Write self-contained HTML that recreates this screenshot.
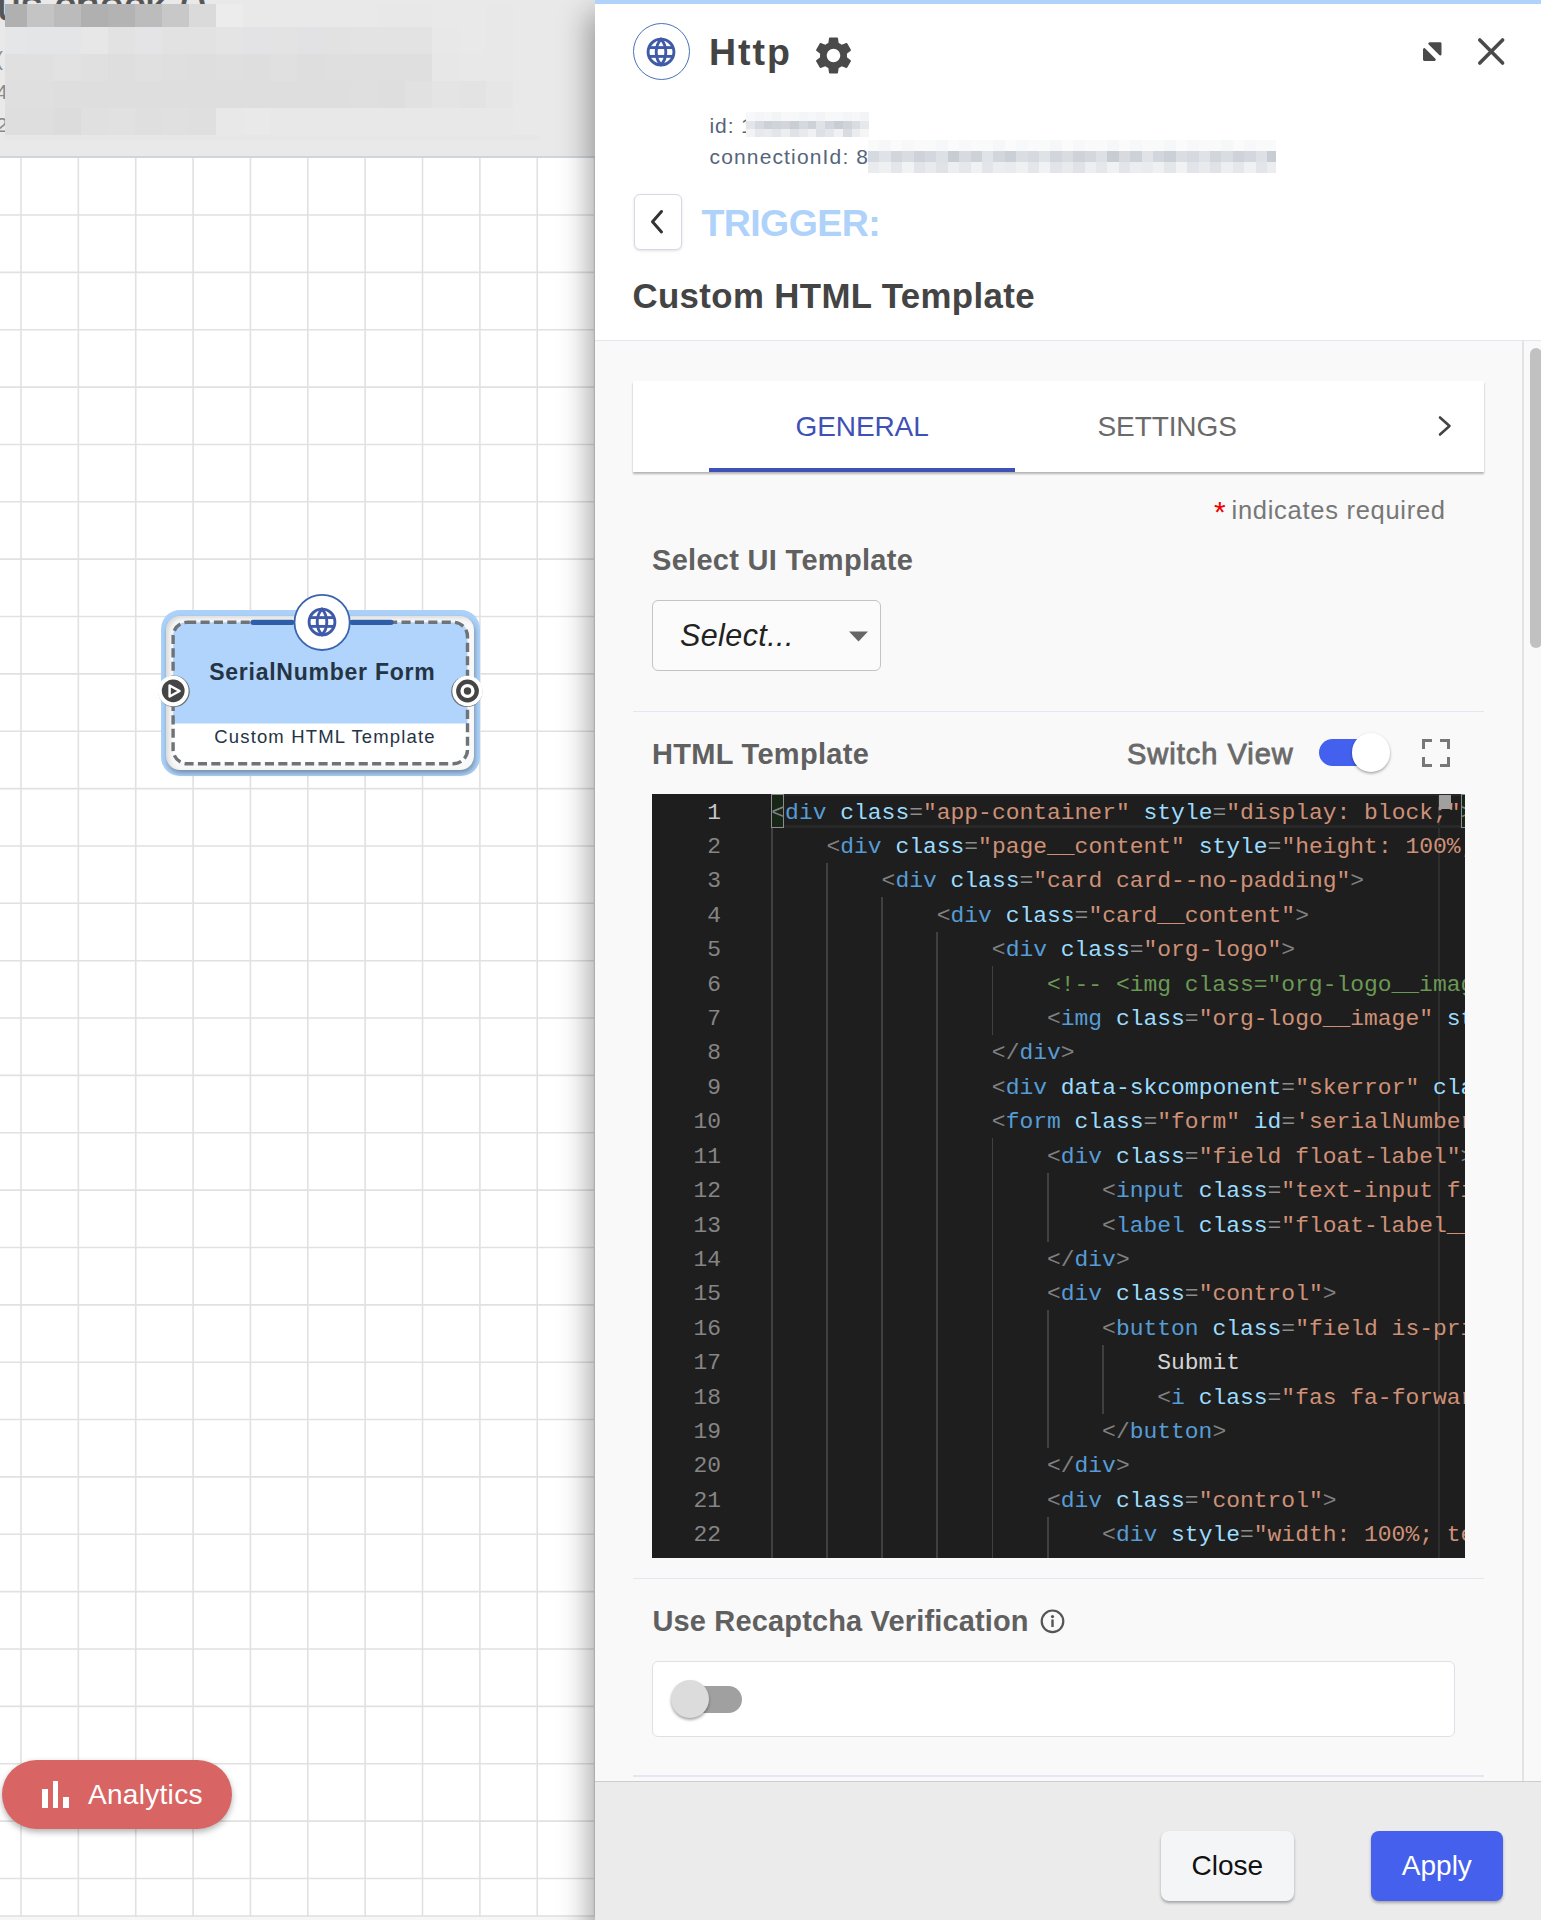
<!DOCTYPE html><html><head><meta charset="utf-8"><style>
*{box-sizing:border-box;margin:0;padding:0}
html,body{width:1541px;height:1920px;overflow:hidden;background:#fff;font-family:"Liberation Sans",sans-serif}
.a{position:absolute}
#canvas{position:absolute;left:0;top:0;width:595px;height:1920px;background:#fff;overflow:hidden}
#hdr{position:absolute;left:0;top:0;width:595px;height:158px;background:#e9e9e9;border-bottom:2px solid #cfd5db;overflow:hidden}
#panel{position:absolute;left:594.5px;top:0;width:946.5px;height:2040px;background:#fff;box-shadow:-6px 12px 28px rgba(0,0,0,.35)}
.code{position:absolute;left:652px;top:794px;width:812.5px;height:764px;background:#1e1e1e;overflow:hidden;font-family:"Liberation Mono",monospace}
.ln{position:absolute;left:0;width:69px;text-align:right;color:#858585;font-size:22.9px;line-height:34.4px;height:34.4px}
.cl{position:absolute;left:119.3px;white-space:pre;font-size:22.98px;line-height:34.4px;height:34.4px;color:#d4d4d4}
.g{position:absolute;width:1.8px;background:#404040}
.p{color:#808080}.t{color:#569cd6}.at{color:#9cdcfe}.s{color:#ce9178}.c{color:#6a9955}.e{color:#d4d4d4}.q{color:#8c8c8c}
.lbl{position:absolute;font-weight:bold;color:#606060;font-size:29px;letter-spacing:0.3px;white-space:nowrap}
</style></head><body>
<div id="canvas">
<svg class="a" style="left:0;top:0" width="595" height="1920"><g stroke="#e1e1e1" stroke-width="1.6"><line x1="21.00" y1="157" x2="21.00" y2="1920"/><line x1="78.36" y1="157" x2="78.36" y2="1920"/><line x1="135.72" y1="157" x2="135.72" y2="1920"/><line x1="193.08" y1="157" x2="193.08" y2="1920"/><line x1="250.44" y1="157" x2="250.44" y2="1920"/><line x1="307.80" y1="157" x2="307.80" y2="1920"/><line x1="365.16" y1="157" x2="365.16" y2="1920"/><line x1="422.52" y1="157" x2="422.52" y2="1920"/><line x1="479.88" y1="157" x2="479.88" y2="1920"/><line x1="537.24" y1="157" x2="537.24" y2="1920"/><line x1="594.60" y1="157" x2="594.60" y2="1920"/><line x1="0" y1="215.00" x2="600" y2="215.00"/><line x1="0" y1="272.36" x2="600" y2="272.36"/><line x1="0" y1="329.72" x2="600" y2="329.72"/><line x1="0" y1="387.08" x2="600" y2="387.08"/><line x1="0" y1="444.44" x2="600" y2="444.44"/><line x1="0" y1="501.80" x2="600" y2="501.80"/><line x1="0" y1="559.16" x2="600" y2="559.16"/><line x1="0" y1="616.52" x2="600" y2="616.52"/><line x1="0" y1="673.88" x2="600" y2="673.88"/><line x1="0" y1="731.24" x2="600" y2="731.24"/><line x1="0" y1="788.60" x2="600" y2="788.60"/><line x1="0" y1="845.96" x2="600" y2="845.96"/><line x1="0" y1="903.32" x2="600" y2="903.32"/><line x1="0" y1="960.68" x2="600" y2="960.68"/><line x1="0" y1="1018.04" x2="600" y2="1018.04"/><line x1="0" y1="1075.40" x2="600" y2="1075.40"/><line x1="0" y1="1132.76" x2="600" y2="1132.76"/><line x1="0" y1="1190.12" x2="600" y2="1190.12"/><line x1="0" y1="1247.48" x2="600" y2="1247.48"/><line x1="0" y1="1304.84" x2="600" y2="1304.84"/><line x1="0" y1="1362.20" x2="600" y2="1362.20"/><line x1="0" y1="1419.56" x2="600" y2="1419.56"/><line x1="0" y1="1476.92" x2="600" y2="1476.92"/><line x1="0" y1="1534.28" x2="600" y2="1534.28"/><line x1="0" y1="1591.64" x2="600" y2="1591.64"/><line x1="0" y1="1649.00" x2="600" y2="1649.00"/><line x1="0" y1="1706.36" x2="600" y2="1706.36"/><line x1="0" y1="1763.72" x2="600" y2="1763.72"/><line x1="0" y1="1821.08" x2="600" y2="1821.08"/><line x1="0" y1="1878.44" x2="600" y2="1878.44"/></g><rect x="0" y="1916.6" width="595" height="3.4" fill="#f7f7f7"/><rect x="0" y="1915.2" width="595" height="1.6" fill="#e0e0e0"/></svg>
<div id="hdr">
<div class="a" style="left:-3px;top:-16px;font-size:43px;line-height:43px;color:#555;-webkit-text-stroke:0.7px #555;white-space:nowrap">us check ()</div>
<div class="a" style="left:-4px;top:41.5px;font-size:21px;color:#8a8a8a;line-height:33px">(<br>4<br>2</div>
<div class="a" style="left:5px;top:4px;width:22px;height:23px;background:#b0b0b0"></div>
<div class="a" style="left:27px;top:4px;width:27px;height:23px;background:#c4c4c4"></div>
<div class="a" style="left:54px;top:4px;width:27px;height:23px;background:#bbbbbb"></div>
<div class="a" style="left:81px;top:4px;width:27px;height:23px;background:#b0b0b0"></div>
<div class="a" style="left:108px;top:4px;width:27px;height:23px;background:#b3b3b3"></div>
<div class="a" style="left:135px;top:4px;width:27px;height:23px;background:#bcbcbc"></div>
<div class="a" style="left:162px;top:4px;width:27px;height:23px;background:#c8c8c8"></div>
<div class="a" style="left:189px;top:4px;width:27px;height:23px;background:#dadada"></div>
<div class="a" style="left:216px;top:4px;width:27px;height:23px;background:#ececec"></div>
<div class="a" style="left:243px;top:4px;width:27px;height:23px;background:#e9e9e9"></div>
<div class="a" style="left:270px;top:4px;width:27px;height:23px;background:#e9e9e9"></div>
<div class="a" style="left:297px;top:4px;width:27px;height:23px;background:#e9e9e9"></div>
<div class="a" style="left:324px;top:4px;width:27px;height:23px;background:#e9e9e9"></div>
<div class="a" style="left:351px;top:4px;width:27px;height:23px;background:#e9e9e9"></div>
<div class="a" style="left:378px;top:4px;width:27px;height:23px;background:#e8e8e8"></div>
<div class="a" style="left:405px;top:4px;width:27px;height:23px;background:#e8e8e8"></div>
<div class="a" style="left:432px;top:4px;width:27px;height:23px;background:#e9e9e9"></div>
<div class="a" style="left:459px;top:4px;width:27px;height:23px;background:#e9e9e9"></div>
<div class="a" style="left:486px;top:4px;width:27px;height:23px;background:#e8e8e8"></div>
<div class="a" style="left:513px;top:4px;width:27px;height:23px;background:#e9e9e9"></div>
<div class="a" style="left:5px;top:27px;width:22px;height:27px;background:#e5e6e8"></div>
<div class="a" style="left:27px;top:27px;width:27px;height:27px;background:#e4e5e7"></div>
<div class="a" style="left:54px;top:27px;width:27px;height:27px;background:#e4e5e7"></div>
<div class="a" style="left:81px;top:27px;width:27px;height:27px;background:#e7e7e7"></div>
<div class="a" style="left:108px;top:27px;width:27px;height:27px;background:#e2e2e2"></div>
<div class="a" style="left:135px;top:27px;width:27px;height:27px;background:#e4e4e6"></div>
<div class="a" style="left:162px;top:27px;width:27px;height:27px;background:#e2e2e2"></div>
<div class="a" style="left:189px;top:27px;width:27px;height:27px;background:#e2e2e2"></div>
<div class="a" style="left:216px;top:27px;width:27px;height:27px;background:#e4e4e4"></div>
<div class="a" style="left:243px;top:27px;width:27px;height:27px;background:#e3e3e5"></div>
<div class="a" style="left:270px;top:27px;width:27px;height:27px;background:#e3e3e3"></div>
<div class="a" style="left:297px;top:27px;width:27px;height:27px;background:#e2e2e4"></div>
<div class="a" style="left:324px;top:27px;width:27px;height:27px;background:#e2e2e2"></div>
<div class="a" style="left:351px;top:27px;width:27px;height:27px;background:#e3e3e3"></div>
<div class="a" style="left:378px;top:27px;width:27px;height:27px;background:#e3e3e3"></div>
<div class="a" style="left:405px;top:27px;width:27px;height:27px;background:#e3e3e3"></div>
<div class="a" style="left:432px;top:27px;width:27px;height:27px;background:#e8e8e8"></div>
<div class="a" style="left:459px;top:27px;width:27px;height:27px;background:#e9e9e9"></div>
<div class="a" style="left:486px;top:27px;width:27px;height:27px;background:#e8e8e8"></div>
<div class="a" style="left:513px;top:27px;width:27px;height:27px;background:#e9e9e9"></div>
<div class="a" style="left:5px;top:54px;width:22px;height:27px;background:#e0e0e0"></div>
<div class="a" style="left:27px;top:54px;width:27px;height:27px;background:#e0e0e0"></div>
<div class="a" style="left:54px;top:54px;width:27px;height:27px;background:#e1e2e1"></div>
<div class="a" style="left:81px;top:54px;width:27px;height:27px;background:#e0e0e0"></div>
<div class="a" style="left:108px;top:54px;width:27px;height:27px;background:#dedede"></div>
<div class="a" style="left:135px;top:54px;width:27px;height:27px;background:#e0e0e0"></div>
<div class="a" style="left:162px;top:54px;width:27px;height:27px;background:#dfdfdf"></div>
<div class="a" style="left:189px;top:54px;width:27px;height:27px;background:#dedede"></div>
<div class="a" style="left:216px;top:54px;width:27px;height:27px;background:#dfdfdf"></div>
<div class="a" style="left:243px;top:54px;width:27px;height:27px;background:#dedede"></div>
<div class="a" style="left:270px;top:54px;width:27px;height:27px;background:#e0e0e0"></div>
<div class="a" style="left:297px;top:54px;width:27px;height:27px;background:#dedede"></div>
<div class="a" style="left:324px;top:54px;width:27px;height:27px;background:#dfdfdf"></div>
<div class="a" style="left:351px;top:54px;width:27px;height:27px;background:#dfdfdf"></div>
<div class="a" style="left:378px;top:54px;width:27px;height:27px;background:#dfdfdf"></div>
<div class="a" style="left:405px;top:54px;width:27px;height:27px;background:#dfdfdf"></div>
<div class="a" style="left:432px;top:54px;width:27px;height:27px;background:#e7e7e7"></div>
<div class="a" style="left:459px;top:54px;width:27px;height:27px;background:#e8e8e8"></div>
<div class="a" style="left:486px;top:54px;width:27px;height:27px;background:#e8e8e8"></div>
<div class="a" style="left:513px;top:54px;width:27px;height:27px;background:#e9e9e9"></div>
<div class="a" style="left:5px;top:81px;width:22px;height:27px;background:#dfdfdf"></div>
<div class="a" style="left:27px;top:81px;width:27px;height:27px;background:#dfdfdf"></div>
<div class="a" style="left:54px;top:81px;width:27px;height:27px;background:#dedede"></div>
<div class="a" style="left:81px;top:81px;width:27px;height:27px;background:#dedede"></div>
<div class="a" style="left:108px;top:81px;width:27px;height:27px;background:#dedede"></div>
<div class="a" style="left:135px;top:81px;width:27px;height:27px;background:#dedede"></div>
<div class="a" style="left:162px;top:81px;width:27px;height:27px;background:#dedede"></div>
<div class="a" style="left:189px;top:81px;width:27px;height:27px;background:#dedede"></div>
<div class="a" style="left:216px;top:81px;width:27px;height:27px;background:#dedede"></div>
<div class="a" style="left:243px;top:81px;width:27px;height:27px;background:#dedede"></div>
<div class="a" style="left:270px;top:81px;width:27px;height:27px;background:#dedede"></div>
<div class="a" style="left:297px;top:81px;width:27px;height:27px;background:#dedede"></div>
<div class="a" style="left:324px;top:81px;width:27px;height:27px;background:#dedede"></div>
<div class="a" style="left:351px;top:81px;width:27px;height:27px;background:#dfdfdf"></div>
<div class="a" style="left:378px;top:81px;width:27px;height:27px;background:#dedede"></div>
<div class="a" style="left:405px;top:81px;width:27px;height:27px;background:#e1e1e1"></div>
<div class="a" style="left:432px;top:81px;width:27px;height:27px;background:#e4e4e4"></div>
<div class="a" style="left:459px;top:81px;width:27px;height:27px;background:#e3e3e3"></div>
<div class="a" style="left:486px;top:81px;width:27px;height:27px;background:#e6e6e6"></div>
<div class="a" style="left:513px;top:81px;width:27px;height:27px;background:#e9e9e9"></div>
<div class="a" style="left:5px;top:108px;width:22px;height:27px;background:#dedede"></div>
<div class="a" style="left:27px;top:108px;width:27px;height:27px;background:#dedede"></div>
<div class="a" style="left:54px;top:108px;width:27px;height:27px;background:#dcdcdc"></div>
<div class="a" style="left:81px;top:108px;width:27px;height:27px;background:#e0e0e0"></div>
<div class="a" style="left:108px;top:108px;width:27px;height:27px;background:#e1e1e1"></div>
<div class="a" style="left:135px;top:108px;width:27px;height:27px;background:#dfdfdf"></div>
<div class="a" style="left:162px;top:108px;width:27px;height:27px;background:#e0e0e0"></div>
<div class="a" style="left:189px;top:108px;width:27px;height:27px;background:#dfdfdf"></div>
<div class="a" style="left:216px;top:108px;width:27px;height:27px;background:#e8e8e8"></div>
<div class="a" style="left:243px;top:108px;width:27px;height:27px;background:#e9e9e9"></div>
<div class="a" style="left:270px;top:108px;width:27px;height:27px;background:#e8e8e8"></div>
<div class="a" style="left:297px;top:108px;width:27px;height:27px;background:#e8e8e8"></div>
<div class="a" style="left:324px;top:108px;width:27px;height:27px;background:#e8e8e8"></div>
<div class="a" style="left:351px;top:108px;width:27px;height:27px;background:#e8e8e8"></div>
<div class="a" style="left:378px;top:108px;width:27px;height:27px;background:#e8e8e8"></div>
<div class="a" style="left:405px;top:108px;width:27px;height:27px;background:#e8e8e8"></div>
<div class="a" style="left:432px;top:108px;width:27px;height:27px;background:#e8e8e8"></div>
<div class="a" style="left:459px;top:108px;width:27px;height:27px;background:#e8e8e8"></div>
<div class="a" style="left:486px;top:108px;width:27px;height:27px;background:#e8e8e8"></div>
<div class="a" style="left:513px;top:108px;width:27px;height:27px;background:#e9e9e9"></div>
<div class="a" style="left:5px;top:135px;width:536px;height:5px;background:#e7e7e7"></div>
</div>
<div class="a" style="left:160.8px;top:609.7px;width:319.2px;height:166px;border-radius:19px;background:#acd1f9"></div>
<div class="a" style="left:166px;top:615.7px;width:308px;height:154.5px;border-radius:14px;background:#f8f8f8;box-shadow:1px 3px 5px rgba(0,0,0,.32), inset 3px 2px 4px rgba(0,0,0,.12)"></div>
<svg class="a" style="left:150px;top:580px" width="340" height="210" viewBox="150 580 340 210"><rect x="173.1" y="622.3" width="294.4" height="141.4" rx="14" fill="#fff"/><path d="M173.1 723.6 V636.3 Q173.1 622.3 187.1 622.3 H453.5 Q467.5 622.3 467.5 636.3 V723.6 Z" fill="#b0d4fb"/><rect x="173.1" y="622.3" width="294.4" height="141.4" rx="14" fill="none" stroke="#6e7378" stroke-width="3.4" stroke-dasharray="9.1 4.3"/><line x1="253" y1="622.3" x2="292" y2="622.3" stroke="#2e5ea8" stroke-width="5.2" stroke-linecap="round"/><line x1="352" y1="622.3" x2="391" y2="622.3" stroke="#2e5ea8" stroke-width="5.2" stroke-linecap="round"/><circle cx="322.1" cy="622.4" r="27.6" fill="#fff" stroke="#3a64b0" stroke-width="1.8"/><circle cx="174" cy="691.3" r="15.8" fill="#6a7075"/><circle cx="173.2" cy="690.8" r="15.4" fill="#fff"/><circle cx="173.2" cy="690.8" r="11.4" fill="#454545"/><path d="M169.6 685.5 L179.6 691 L169.6 696.5 Z" fill="none" stroke="#fff" stroke-width="2.5" stroke-linejoin="round"/><circle cx="466.8" cy="691.5" r="15.6" fill="#6a7075"/><circle cx="467.5" cy="691" r="15.2" fill="#fff"/><circle cx="467.5" cy="691" r="11.4" fill="#454545"/><circle cx="467.5" cy="691" r="5.4" fill="none" stroke="#fff" stroke-width="3.4"/></svg>
<svg class="a" style="left:307.1px;top:607.4px" width="30" height="30" viewBox="-15 -15 30 30"><g fill="none" stroke="#3f5aa8" stroke-width="2.9"><circle r="12.9"/><path d="M0 -12.8 C-6.4 -6 -6.4 6 0 12.8 C6.4 6 6.4 -6 0 -12.8 Z"/><line x1="-12.8" y1="-4.4" x2="12.8" y2="-4.4"/><line x1="-12.8" y1="4.4" x2="12.8" y2="4.4"/></g></svg>
<div class="a" style="left:162.3px;top:658.5px;width:320px;text-align:center;font-size:23px;letter-spacing:0.75px;font-weight:bold;color:#253445;white-space:nowrap">SerialNumber Form</div>
<div class="a" style="left:167px;top:726px;width:316px;text-align:center;font-size:18.5px;letter-spacing:1.15px;color:#253445;white-space:nowrap">Custom HTML Template</div>
<div class="a" style="left:2px;top:1759.5px;width:230px;height:69.5px;border-radius:35px;background:#d96464;box-shadow:0 3px 6px rgba(0,0,0,.3)"></div>
<div class="a" style="left:42px;top:1789px;width:6px;height:19px;background:#fff"></div>
<div class="a" style="left:52.6px;top:1781.3px;width:5.5px;height:26.7px;background:#fff"></div>
<div class="a" style="left:63.3px;top:1796.5px;width:5.6px;height:11.5px;background:#fff"></div>
<div class="a" style="left:88px;top:1778.5px;font-size:28px;letter-spacing:0.3px;color:#fff;white-space:nowrap">Analytics</div>
</div>
<div id="panel"></div>
<div class="a" style="left:595px;top:0;width:946px;height:4px;background:#afd3fb"></div>
<div class="a" style="left:633px;top:22.6px;width:57.2px;height:57.2px;border-radius:50%;border:1.7px solid #4a72b8"></div>
<svg class="a" style="left:646.4px;top:36.6px" width="30" height="30" viewBox="-15 -15 30 30"><g fill="none" stroke="#3f5aa6" stroke-width="2.9"><circle r="12.9"/><path d="M0 -12.8 C-6.4 -6 -6.4 6 0 12.8 C6.4 6 6.4 -6 0 -12.8 Z"/><line x1="-12.8" y1="-4.4" x2="12.8" y2="-4.4"/><line x1="-12.8" y1="4.4" x2="12.8" y2="4.4"/></g></svg>
<div class="a" style="left:709px;top:30px;font-size:37.5px;letter-spacing:2px;font-weight:bold;color:#444;white-space:nowrap;line-height:44px">Http</div>
<svg class="a" style="left:811.2px;top:33.2px" width="45" height="45" viewBox="0 0 24 24"><path fill="#4a4a4a" d="M19.14 12.94c.04-.3.06-.61.06-.94 0-.32-.02-.64-.07-.94l2.03-1.58c.18-.14.23-.41.12-.61l-1.92-3.32c-.12-.22-.37-.29-.59-.22l-2.39.96c-.5-.38-1.03-.7-1.62-.94l-.36-2.54c-.04-.24-.24-.41-.48-.41h-3.84c-.24 0-.43.17-.47.41l-.36 2.54c-.59.24-1.13.57-1.62.94l-2.39-.96c-.22-.08-.47 0-.59.22L2.74 8.87c-.12.21-.08.47.12.61l2.03 1.58c-.05.3-.09.63-.09.94s.02.64.07.94l-2.03 1.58c-.18.14-.23.41-.12.61l1.92 3.32c.12.22.37.29.59.22l2.39-.96c.5.38 1.03.7 1.62.94l.36 2.54c.05.24.24.41.48.41h3.84c.24 0 .44-.17.47-.41l.36-2.54c.59-.24 1.13-.56 1.62-.94l2.39.96c.22.08.47 0 .59-.22l1.92-3.32c.12-.22.07-.47-.12-.61l-2.01-1.58zM12 15.6c-1.98 0-3.6-1.62-3.6-3.6s1.62-3.6 3.6-3.6 3.6 1.62 3.6 3.6-1.62 3.6-3.6 3.6z"/></svg>
<svg class="a" style="left:1415px;top:35px" width="35" height="33" viewBox="1415 35 35 33"><g fill="#4a4a4a" stroke="#4a4a4a" stroke-width="2.6" stroke-linejoin="round"><path d="M1429.6 43.6 L1440.2 43.6 L1440.2 54.2 Z"/><path d="M1424.3 49.4 L1424.3 59.6 L1434.5 59.6 Z"/></g></svg>
<svg class="a" style="left:1474px;top:35px" width="34" height="34" viewBox="0 0 34 34"><g stroke="#4a4a4a" stroke-width="3.6" stroke-linecap="round"><line x1="5.8" y1="5" x2="28.6" y2="28"/><line x1="28.6" y1="5" x2="5.8" y2="28"/></g></svg>
<div class="a" style="left:709.5px;top:113px;font-size:21px;letter-spacing:0.9px;color:#55657a;white-space:nowrap;line-height:26px">id: 1</div>
<div class="a" style="left:709.5px;top:143.5px;font-size:21px;letter-spacing:1.15px;color:#55657a;white-space:nowrap;line-height:26px">connectionId: 8</div>
<div class="a" style="left:746.0px;top:112.0px;width:9.1px;height:8.5px;background:#f7f8f9"></div><div class="a" style="left:754.8px;top:112.0px;width:9.1px;height:8.5px;background:#f4f5f6"></div><div class="a" style="left:763.6px;top:112.0px;width:9.1px;height:8.5px;background:#f6f7f8"></div><div class="a" style="left:772.4px;top:112.0px;width:9.1px;height:8.5px;background:#f3f4f6"></div><div class="a" style="left:781.2px;top:112.0px;width:9.1px;height:8.5px;background:#f8f8f9"></div><div class="a" style="left:790.0px;top:112.0px;width:9.1px;height:8.5px;background:#f7f8f9"></div><div class="a" style="left:798.8px;top:112.0px;width:9.1px;height:8.5px;background:#f4f5f6"></div><div class="a" style="left:807.6px;top:112.0px;width:9.1px;height:8.5px;background:#f6f7f8"></div><div class="a" style="left:816.4px;top:112.0px;width:9.1px;height:8.5px;background:#f3f4f6"></div><div class="a" style="left:825.2px;top:112.0px;width:9.1px;height:8.5px;background:#f8f8f9"></div><div class="a" style="left:834.0px;top:112.0px;width:9.1px;height:8.5px;background:#f7f8f9"></div><div class="a" style="left:842.8px;top:112.0px;width:9.1px;height:8.5px;background:#f4f5f6"></div><div class="a" style="left:851.6px;top:112.0px;width:9.1px;height:8.5px;background:#f6f7f8"></div><div class="a" style="left:860.4px;top:112.0px;width:8.9px;height:8.5px;background:#f3f4f6"></div>
<div class="a" style="left:746.0px;top:120.5px;width:9.1px;height:8.5px;background:#e2e5e9"></div><div class="a" style="left:754.8px;top:120.5px;width:9.1px;height:8.5px;background:#d6dae0"></div><div class="a" style="left:763.6px;top:120.5px;width:9.1px;height:8.5px;background:#ccd1d8"></div><div class="a" style="left:772.4px;top:120.5px;width:9.1px;height:8.5px;background:#cfd3da"></div><div class="a" style="left:781.2px;top:120.5px;width:9.1px;height:8.5px;background:#d2d6dc"></div><div class="a" style="left:790.0px;top:120.5px;width:9.1px;height:8.5px;background:#c9ced5"></div><div class="a" style="left:798.8px;top:120.5px;width:9.1px;height:8.5px;background:#d5d9df"></div><div class="a" style="left:807.6px;top:120.5px;width:9.1px;height:8.5px;background:#cdd2d8"></div><div class="a" style="left:816.4px;top:120.5px;width:9.1px;height:8.5px;background:#dfe2e6"></div><div class="a" style="left:825.2px;top:120.5px;width:9.1px;height:8.5px;background:#d2d6dc"></div><div class="a" style="left:834.0px;top:120.5px;width:9.1px;height:8.5px;background:#c8cdd4"></div><div class="a" style="left:842.8px;top:120.5px;width:9.1px;height:8.5px;background:#d0d4da"></div><div class="a" style="left:851.6px;top:120.5px;width:9.1px;height:8.5px;background:#d9dce1"></div><div class="a" style="left:860.4px;top:120.5px;width:8.9px;height:8.5px;background:#e6e8eb"></div>
<div class="a" style="left:746.0px;top:129.0px;width:9.1px;height:8.3px;background:#f2f3f5"></div><div class="a" style="left:754.8px;top:129.0px;width:9.1px;height:8.3px;background:#e6e8ec"></div><div class="a" style="left:763.6px;top:129.0px;width:9.1px;height:8.3px;background:#e9ebee"></div><div class="a" style="left:772.4px;top:129.0px;width:9.1px;height:8.3px;background:#e2e5e9"></div><div class="a" style="left:781.2px;top:129.0px;width:9.1px;height:8.3px;background:#eceef0"></div><div class="a" style="left:790.0px;top:129.0px;width:9.1px;height:8.3px;background:#dfe2e6"></div><div class="a" style="left:798.8px;top:129.0px;width:9.1px;height:8.3px;background:#e7e9ec"></div><div class="a" style="left:807.6px;top:129.0px;width:9.1px;height:8.3px;background:#f0f1f3"></div><div class="a" style="left:816.4px;top:129.0px;width:9.1px;height:8.3px;background:#dde0e5"></div><div class="a" style="left:825.2px;top:129.0px;width:9.1px;height:8.3px;background:#e3e6ea"></div><div class="a" style="left:834.0px;top:129.0px;width:9.1px;height:8.3px;background:#f0f1f3"></div><div class="a" style="left:842.8px;top:129.0px;width:9.1px;height:8.3px;background:#d8dce1"></div><div class="a" style="left:851.6px;top:129.0px;width:9.1px;height:8.3px;background:#eaecef"></div><div class="a" style="left:860.4px;top:129.0px;width:8.9px;height:8.3px;background:#f5f5f6"></div>
<div class="a" style="left:868.0px;top:140.0px;width:11.7px;height:11.0px;background:#f9fafa"></div><div class="a" style="left:879.4px;top:140.0px;width:11.7px;height:11.0px;background:#f6f7f8"></div><div class="a" style="left:890.8px;top:140.0px;width:11.7px;height:11.0px;background:#fbfbfb"></div><div class="a" style="left:902.2px;top:140.0px;width:11.7px;height:11.0px;background:#f7f8f9"></div><div class="a" style="left:913.6px;top:140.0px;width:11.7px;height:11.0px;background:#fafafb"></div><div class="a" style="left:925.0px;top:140.0px;width:11.7px;height:11.0px;background:#f9fafa"></div><div class="a" style="left:936.4px;top:140.0px;width:11.7px;height:11.0px;background:#f6f7f8"></div><div class="a" style="left:947.8px;top:140.0px;width:11.7px;height:11.0px;background:#fbfbfb"></div><div class="a" style="left:959.2px;top:140.0px;width:11.7px;height:11.0px;background:#f7f8f9"></div><div class="a" style="left:970.6px;top:140.0px;width:11.7px;height:11.0px;background:#fafafb"></div><div class="a" style="left:982.0px;top:140.0px;width:11.7px;height:11.0px;background:#f9fafa"></div><div class="a" style="left:993.4px;top:140.0px;width:11.7px;height:11.0px;background:#f6f7f8"></div><div class="a" style="left:1004.8px;top:140.0px;width:11.7px;height:11.0px;background:#fbfbfb"></div><div class="a" style="left:1016.2px;top:140.0px;width:11.7px;height:11.0px;background:#f7f8f9"></div><div class="a" style="left:1027.6px;top:140.0px;width:11.7px;height:11.0px;background:#fafafb"></div><div class="a" style="left:1039.0px;top:140.0px;width:11.7px;height:11.0px;background:#f9fafa"></div><div class="a" style="left:1050.4px;top:140.0px;width:11.7px;height:11.0px;background:#f6f7f8"></div><div class="a" style="left:1061.8px;top:140.0px;width:11.7px;height:11.0px;background:#fbfbfb"></div><div class="a" style="left:1073.2px;top:140.0px;width:11.7px;height:11.0px;background:#f7f8f9"></div><div class="a" style="left:1084.6px;top:140.0px;width:11.7px;height:11.0px;background:#fafafb"></div><div class="a" style="left:1096.0px;top:140.0px;width:11.7px;height:11.0px;background:#f9fafa"></div><div class="a" style="left:1107.4px;top:140.0px;width:11.7px;height:11.0px;background:#f6f7f8"></div><div class="a" style="left:1118.8px;top:140.0px;width:11.7px;height:11.0px;background:#fbfbfb"></div><div class="a" style="left:1130.2px;top:140.0px;width:11.7px;height:11.0px;background:#f7f8f9"></div><div class="a" style="left:1141.6px;top:140.0px;width:11.7px;height:11.0px;background:#fafafb"></div><div class="a" style="left:1153.0px;top:140.0px;width:11.7px;height:11.0px;background:#f9fafa"></div><div class="a" style="left:1164.4px;top:140.0px;width:11.7px;height:11.0px;background:#f6f7f8"></div><div class="a" style="left:1175.8px;top:140.0px;width:11.7px;height:11.0px;background:#fbfbfb"></div><div class="a" style="left:1187.2px;top:140.0px;width:11.7px;height:11.0px;background:#f7f8f9"></div><div class="a" style="left:1198.6px;top:140.0px;width:11.7px;height:11.0px;background:#fafafb"></div><div class="a" style="left:1210.0px;top:140.0px;width:11.7px;height:11.0px;background:#f9fafa"></div><div class="a" style="left:1221.4px;top:140.0px;width:11.7px;height:11.0px;background:#f6f7f8"></div><div class="a" style="left:1232.8px;top:140.0px;width:11.7px;height:11.0px;background:#fbfbfb"></div><div class="a" style="left:1244.2px;top:140.0px;width:11.7px;height:11.0px;background:#f7f8f9"></div><div class="a" style="left:1255.6px;top:140.0px;width:11.7px;height:11.0px;background:#fafafb"></div><div class="a" style="left:1267.0px;top:140.0px;width:9.3px;height:11.0px;background:#f9fafa"></div>
<div class="a" style="left:868.0px;top:151.0px;width:11.7px;height:11.0px;background:#d6dae0"></div><div class="a" style="left:879.4px;top:151.0px;width:11.7px;height:11.0px;background:#dfe2e6"></div><div class="a" style="left:890.8px;top:151.0px;width:11.7px;height:11.0px;background:#d2d6dc"></div><div class="a" style="left:902.2px;top:151.0px;width:11.7px;height:11.0px;background:#d9dde2"></div><div class="a" style="left:913.6px;top:151.0px;width:11.7px;height:11.0px;background:#cfd3d9"></div><div class="a" style="left:925.0px;top:151.0px;width:11.7px;height:11.0px;background:#d4d8de"></div><div class="a" style="left:936.4px;top:151.0px;width:11.7px;height:11.0px;background:#dde0e5"></div><div class="a" style="left:947.8px;top:151.0px;width:11.7px;height:11.0px;background:#c8cdd4"></div><div class="a" style="left:959.2px;top:151.0px;width:11.7px;height:11.0px;background:#d7dbe0"></div><div class="a" style="left:970.6px;top:151.0px;width:11.7px;height:11.0px;background:#cdd2d8"></div><div class="a" style="left:982.0px;top:151.0px;width:11.7px;height:11.0px;background:#e0e3e7"></div><div class="a" style="left:993.4px;top:151.0px;width:11.7px;height:11.0px;background:#d3d7dd"></div><div class="a" style="left:1004.8px;top:151.0px;width:11.7px;height:11.0px;background:#cbd0d6"></div><div class="a" style="left:1016.2px;top:151.0px;width:11.7px;height:11.0px;background:#dadee3"></div><div class="a" style="left:1027.6px;top:151.0px;width:11.7px;height:11.0px;background:#d6dae0"></div><div class="a" style="left:1039.0px;top:151.0px;width:11.7px;height:11.0px;background:#dfe2e6"></div><div class="a" style="left:1050.4px;top:151.0px;width:11.7px;height:11.0px;background:#d2d6dc"></div><div class="a" style="left:1061.8px;top:151.0px;width:11.7px;height:11.0px;background:#d9dde2"></div><div class="a" style="left:1073.2px;top:151.0px;width:11.7px;height:11.0px;background:#cfd3d9"></div><div class="a" style="left:1084.6px;top:151.0px;width:11.7px;height:11.0px;background:#d4d8de"></div><div class="a" style="left:1096.0px;top:151.0px;width:11.7px;height:11.0px;background:#dde0e5"></div><div class="a" style="left:1107.4px;top:151.0px;width:11.7px;height:11.0px;background:#c8cdd4"></div><div class="a" style="left:1118.8px;top:151.0px;width:11.7px;height:11.0px;background:#d7dbe0"></div><div class="a" style="left:1130.2px;top:151.0px;width:11.7px;height:11.0px;background:#cdd2d8"></div><div class="a" style="left:1141.6px;top:151.0px;width:11.7px;height:11.0px;background:#e0e3e7"></div><div class="a" style="left:1153.0px;top:151.0px;width:11.7px;height:11.0px;background:#d3d7dd"></div><div class="a" style="left:1164.4px;top:151.0px;width:11.7px;height:11.0px;background:#cbd0d6"></div><div class="a" style="left:1175.8px;top:151.0px;width:11.7px;height:11.0px;background:#dadee3"></div><div class="a" style="left:1187.2px;top:151.0px;width:11.7px;height:11.0px;background:#d6dae0"></div><div class="a" style="left:1198.6px;top:151.0px;width:11.7px;height:11.0px;background:#dfe2e6"></div><div class="a" style="left:1210.0px;top:151.0px;width:11.7px;height:11.0px;background:#d2d6dc"></div><div class="a" style="left:1221.4px;top:151.0px;width:11.7px;height:11.0px;background:#d9dde2"></div><div class="a" style="left:1232.8px;top:151.0px;width:11.7px;height:11.0px;background:#cfd3d9"></div><div class="a" style="left:1244.2px;top:151.0px;width:11.7px;height:11.0px;background:#d4d8de"></div><div class="a" style="left:1255.6px;top:151.0px;width:11.7px;height:11.0px;background:#dde0e5"></div><div class="a" style="left:1267.0px;top:151.0px;width:9.3px;height:11.0px;background:#c8cdd4"></div>
<div class="a" style="left:868.0px;top:162.0px;width:11.7px;height:10.5px;background:#e9ebee"></div><div class="a" style="left:879.4px;top:162.0px;width:11.7px;height:10.5px;background:#eef0f2"></div><div class="a" style="left:890.8px;top:162.0px;width:11.7px;height:10.5px;background:#e4e7ea"></div><div class="a" style="left:902.2px;top:162.0px;width:11.7px;height:10.5px;background:#f1f2f4"></div><div class="a" style="left:913.6px;top:162.0px;width:11.7px;height:10.5px;background:#e1e4e8"></div><div class="a" style="left:925.0px;top:162.0px;width:11.7px;height:10.5px;background:#e8eaed"></div><div class="a" style="left:936.4px;top:162.0px;width:11.7px;height:10.5px;background:#dfe2e6"></div><div class="a" style="left:947.8px;top:162.0px;width:11.7px;height:10.5px;background:#eceef1"></div><div class="a" style="left:959.2px;top:162.0px;width:11.7px;height:10.5px;background:#e5e7eb"></div><div class="a" style="left:970.6px;top:162.0px;width:11.7px;height:10.5px;background:#f0f1f3"></div><div class="a" style="left:982.0px;top:162.0px;width:11.7px;height:10.5px;background:#e2e5e9"></div><div class="a" style="left:993.4px;top:162.0px;width:11.7px;height:10.5px;background:#ebedf0"></div><div class="a" style="left:1004.8px;top:162.0px;width:11.7px;height:10.5px;background:#e9ebee"></div><div class="a" style="left:1016.2px;top:162.0px;width:11.7px;height:10.5px;background:#eef0f2"></div><div class="a" style="left:1027.6px;top:162.0px;width:11.7px;height:10.5px;background:#e4e7ea"></div><div class="a" style="left:1039.0px;top:162.0px;width:11.7px;height:10.5px;background:#f1f2f4"></div><div class="a" style="left:1050.4px;top:162.0px;width:11.7px;height:10.5px;background:#e1e4e8"></div><div class="a" style="left:1061.8px;top:162.0px;width:11.7px;height:10.5px;background:#e8eaed"></div><div class="a" style="left:1073.2px;top:162.0px;width:11.7px;height:10.5px;background:#dfe2e6"></div><div class="a" style="left:1084.6px;top:162.0px;width:11.7px;height:10.5px;background:#eceef1"></div><div class="a" style="left:1096.0px;top:162.0px;width:11.7px;height:10.5px;background:#e5e7eb"></div><div class="a" style="left:1107.4px;top:162.0px;width:11.7px;height:10.5px;background:#f0f1f3"></div><div class="a" style="left:1118.8px;top:162.0px;width:11.7px;height:10.5px;background:#e2e5e9"></div><div class="a" style="left:1130.2px;top:162.0px;width:11.7px;height:10.5px;background:#ebedf0"></div><div class="a" style="left:1141.6px;top:162.0px;width:11.7px;height:10.5px;background:#e9ebee"></div><div class="a" style="left:1153.0px;top:162.0px;width:11.7px;height:10.5px;background:#eef0f2"></div><div class="a" style="left:1164.4px;top:162.0px;width:11.7px;height:10.5px;background:#e4e7ea"></div><div class="a" style="left:1175.8px;top:162.0px;width:11.7px;height:10.5px;background:#f1f2f4"></div><div class="a" style="left:1187.2px;top:162.0px;width:11.7px;height:10.5px;background:#e1e4e8"></div><div class="a" style="left:1198.6px;top:162.0px;width:11.7px;height:10.5px;background:#e8eaed"></div><div class="a" style="left:1210.0px;top:162.0px;width:11.7px;height:10.5px;background:#dfe2e6"></div><div class="a" style="left:1221.4px;top:162.0px;width:11.7px;height:10.5px;background:#eceef1"></div><div class="a" style="left:1232.8px;top:162.0px;width:11.7px;height:10.5px;background:#e5e7eb"></div><div class="a" style="left:1244.2px;top:162.0px;width:11.7px;height:10.5px;background:#f0f1f3"></div><div class="a" style="left:1255.6px;top:162.0px;width:11.7px;height:10.5px;background:#e2e5e9"></div><div class="a" style="left:1267.0px;top:162.0px;width:9.3px;height:10.5px;background:#ebedf0"></div>
<div class="a" style="left:633.5px;top:193.5px;width:48.5px;height:56.5px;border-radius:6px;border:1.3px solid #d5d9e6;background:#fff;box-shadow:0 1px 3px rgba(0,0,0,.12)"></div>
<svg class="a" style="left:645px;top:208px" width="24" height="28" viewBox="0 0 24 28"><path d="M16.5 3.5 L7.5 13.8 L16.5 24" fill="none" stroke="#333" stroke-width="3" stroke-linecap="round" stroke-linejoin="round"/></svg>
<div class="a" style="left:701.5px;top:202px;font-size:37.5px;letter-spacing:-0.6px;font-weight:bold;color:#aed2fa;white-space:nowrap;line-height:42px">TRIGGER:</div>
<div class="a" style="left:632.5px;top:276px;font-size:34.8px;letter-spacing:0.37px;font-weight:bold;color:#444;white-space:nowrap;line-height:40px">Custom HTML Template</div>
<div class="a" style="left:595px;top:340px;width:946px;height:1442px;background:#f9f9f9;border-top:1.5px solid #e3e6ee"></div>
<div class="a" style="left:1522px;top:341px;width:1.5px;height:1441px;background:#e3e3e3"></div>
<div class="a" style="left:1529.5px;top:348px;width:12px;height:300px;border-radius:6px;background:#c1c1c1"></div>
<div class="a" style="left:633px;top:381px;width:850.5px;height:91px;background:#fff;box-shadow:0 2px 2px rgba(0,0,0,.28)"></div>
<div class="a" style="left:709.3px;top:468px;width:306px;height:4px;background:#3f51b5"></div>
<div class="a" style="left:795.5px;top:411px;font-size:28px;letter-spacing:-0.1px;color:#3f51b5;white-space:nowrap;line-height:32px">GENERAL</div>
<div class="a" style="left:1097.5px;top:411px;font-size:28px;letter-spacing:-0.1px;color:#6a6a6a;white-space:nowrap;line-height:32px">SETTINGS</div>
<svg class="a" style="left:1434px;top:413px" width="22" height="26" viewBox="0 0 22 26"><path d="M6 4.5 L15.5 13 L6 21.5" fill="none" stroke="#444" stroke-width="2.6" stroke-linecap="round" stroke-linejoin="round"/></svg>
<div class="a" style="left:1214px;top:497px;font-size:30px;color:#e00;white-space:nowrap;line-height:30px">*</div>
<div class="a" style="left:1231.5px;top:495px;font-size:25.5px;letter-spacing:0.72px;color:#777;white-space:nowrap;line-height:30px">indicates required</div>
<div class="lbl" style="left:652px;top:543px;line-height:34px">Select UI Template</div>
<div class="a" style="left:652.4px;top:599.7px;width:228.4px;height:71.4px;border-radius:6px;border:1.8px solid #c4c4c4;background:#fbfbfb"></div>
<div class="a" style="left:680px;top:617px;font-size:30.5px;letter-spacing:0.4px;font-style:italic;color:#222;white-space:nowrap;line-height:36px">Select...</div>
<svg class="a" style="left:847px;top:630px" width="23" height="13" viewBox="0 0 23 13"><path d="M2 1.5 L21 1.5 L11.5 11.5 Z" fill="#666"/></svg>
<div class="a" style="left:633px;top:710.5px;width:850.5px;height:1.5px;background:#e4e7f2"></div>
<div class="lbl" style="left:652px;top:737px;line-height:34px">HTML Template</div>
<div class="a" style="left:1127px;top:737px;line-height:34px;font-size:29px;color:#6a6a6a;-webkit-text-stroke:0.9px #6a6a6a;letter-spacing:1.0px;white-space:nowrap">Switch View</div>
<div class="a" style="left:1319px;top:738.7px;width:62px;height:27.4px;border-radius:14px;background:#4361ee"></div>
<div class="a" style="left:1351.8px;top:733.2px;width:38.4px;height:38.4px;border-radius:50%;background:#fff;box-shadow:0 1.5px 3px rgba(0,0,0,.35)"></div>
<svg class="a" style="left:1421px;top:738px" width="30" height="30" viewBox="0 0 30 30"><g fill="none" stroke="#777" stroke-width="3"><path d="M2.5 11 V2.5 H11"/><path d="M19 2.5 H27.5 V11"/><path d="M27.5 19 V27.5 H19"/><path d="M11 27.5 H2.5 V19"/></g></svg>
<div class="code">
<div class="a" style="left:786.3px;top:0;width:1.3px;height:764px;background:#2e2e2e"></div>
<div class="a" style="left:119px;top:0;width:700px;height:34.4px;border-top:2.5px solid #282828;border-bottom:3px solid #282828"></div>
<div class="a" style="left:118.8px;top:0px;width:13.2px;height:33.8px;background:#182618;border:1.6px solid #8c8c8c"></div>
<div class="a" style="left:809.3px;top:0px;width:13.2px;height:33.8px;background:#182618;border:1.6px solid #8c8c8c"></div>
<div class="ln" style="top:1.50px;color:#c6c6c6">1</div>
<div class="cl" style="top:1.50px"><span class="p">&lt;</span><span class="t">div</span><span class="e"> </span><span class="at">class</span><span class="q">=</span><span class="s">&quot;app-container&quot;</span><span class="e"> </span><span class="at">style</span><span class="q">=</span><span class="s">&quot;display: block;&quot;</span><span class="p">&gt;</span></div>
<div class="ln" style="top:35.92px;color:#858585">2</div>
<div class="g" style="left:119.00px;top:34.42px;height:34.62px"></div>
<div class="cl" style="top:35.92px">    <span class="p">&lt;</span><span class="t">div</span><span class="e"> </span><span class="at">class</span><span class="q">=</span><span class="s">&quot;page__content&quot;</span><span class="e"> </span><span class="at">style</span><span class="q">=</span><span class="s">&quot;height: 100%; width: 100%&quot;</span><span class="p">&gt;</span></div>
<div class="ln" style="top:70.34px;color:#858585">3</div>
<div class="g" style="left:119.00px;top:68.84px;height:34.62px"></div>
<div class="g" style="left:174.16px;top:68.84px;height:34.62px"></div>
<div class="cl" style="top:70.34px">        <span class="p">&lt;</span><span class="t">div</span><span class="e"> </span><span class="at">class</span><span class="q">=</span><span class="s">&quot;card card--no-padding&quot;</span><span class="p">&gt;</span></div>
<div class="ln" style="top:104.76px;color:#858585">4</div>
<div class="g" style="left:119.00px;top:103.26px;height:34.62px"></div>
<div class="g" style="left:174.16px;top:103.26px;height:34.62px"></div>
<div class="g" style="left:229.32px;top:103.26px;height:34.62px"></div>
<div class="cl" style="top:104.76px">            <span class="p">&lt;</span><span class="t">div</span><span class="e"> </span><span class="at">class</span><span class="q">=</span><span class="s">&quot;card__content&quot;</span><span class="p">&gt;</span></div>
<div class="ln" style="top:139.18px;color:#858585">5</div>
<div class="g" style="left:119.00px;top:137.68px;height:34.62px"></div>
<div class="g" style="left:174.16px;top:137.68px;height:34.62px"></div>
<div class="g" style="left:229.32px;top:137.68px;height:34.62px"></div>
<div class="g" style="left:284.48px;top:137.68px;height:34.62px"></div>
<div class="cl" style="top:139.18px">                <span class="p">&lt;</span><span class="t">div</span><span class="e"> </span><span class="at">class</span><span class="q">=</span><span class="s">&quot;org-logo&quot;</span><span class="p">&gt;</span></div>
<div class="ln" style="top:173.60px;color:#858585">6</div>
<div class="g" style="left:119.00px;top:172.10px;height:34.62px"></div>
<div class="g" style="left:174.16px;top:172.10px;height:34.62px"></div>
<div class="g" style="left:229.32px;top:172.10px;height:34.62px"></div>
<div class="g" style="left:284.48px;top:172.10px;height:34.62px"></div>
<div class="g" style="left:339.64px;top:172.10px;height:34.62px"></div>
<div class="cl" style="top:173.60px">                    <span class="c">&lt;!-- &lt;img class=&quot;org-logo__image&quot; src=&quot;x&quot;&gt; --&gt;</span></div>
<div class="ln" style="top:208.02px;color:#858585">7</div>
<div class="g" style="left:119.00px;top:206.52px;height:34.62px"></div>
<div class="g" style="left:174.16px;top:206.52px;height:34.62px"></div>
<div class="g" style="left:229.32px;top:206.52px;height:34.62px"></div>
<div class="g" style="left:284.48px;top:206.52px;height:34.62px"></div>
<div class="g" style="left:339.64px;top:206.52px;height:34.62px"></div>
<div class="cl" style="top:208.02px">                    <span class="p">&lt;</span><span class="t">img</span><span class="e"> </span><span class="at">class</span><span class="q">=</span><span class="s">&quot;org-logo__image&quot;</span><span class="at"> style=&quot;max-width: 100%&quot;</span></div>
<div class="ln" style="top:242.44px;color:#858585">8</div>
<div class="g" style="left:119.00px;top:240.94px;height:34.62px"></div>
<div class="g" style="left:174.16px;top:240.94px;height:34.62px"></div>
<div class="g" style="left:229.32px;top:240.94px;height:34.62px"></div>
<div class="g" style="left:284.48px;top:240.94px;height:34.62px"></div>
<div class="cl" style="top:242.44px">                <span class="p">&lt;/</span><span class="t">div</span><span class="p">&gt;</span></div>
<div class="ln" style="top:276.86px;color:#858585">9</div>
<div class="g" style="left:119.00px;top:275.36px;height:34.62px"></div>
<div class="g" style="left:174.16px;top:275.36px;height:34.62px"></div>
<div class="g" style="left:229.32px;top:275.36px;height:34.62px"></div>
<div class="g" style="left:284.48px;top:275.36px;height:34.62px"></div>
<div class="cl" style="top:276.86px">                <span class="p">&lt;</span><span class="t">div</span><span class="e"> </span><span class="at">data-skcomponent</span><span class="q">=</span><span class="s">&quot;skerror&quot;</span><span class="at"> class=&quot;x&quot;</span></div>
<div class="ln" style="top:311.28px;color:#858585">10</div>
<div class="g" style="left:119.00px;top:309.78px;height:34.62px"></div>
<div class="g" style="left:174.16px;top:309.78px;height:34.62px"></div>
<div class="g" style="left:229.32px;top:309.78px;height:34.62px"></div>
<div class="g" style="left:284.48px;top:309.78px;height:34.62px"></div>
<div class="cl" style="top:311.28px">                <span class="p">&lt;</span><span class="t">form</span><span class="e"> </span><span class="at">class</span><span class="q">=</span><span class="s">&quot;form&quot;</span><span class="e"> </span><span class="at">id</span><span class="q">=</span><span class="s">&#x27;serialNumberForm&#x27;</span></div>
<div class="ln" style="top:345.70px;color:#858585">11</div>
<div class="g" style="left:119.00px;top:344.20px;height:34.62px"></div>
<div class="g" style="left:174.16px;top:344.20px;height:34.62px"></div>
<div class="g" style="left:229.32px;top:344.20px;height:34.62px"></div>
<div class="g" style="left:284.48px;top:344.20px;height:34.62px"></div>
<div class="g" style="left:339.64px;top:344.20px;height:34.62px"></div>
<div class="cl" style="top:345.70px">                    <span class="p">&lt;</span><span class="t">div</span><span class="e"> </span><span class="at">class</span><span class="q">=</span><span class="s">&quot;field float-label&quot;</span><span class="p">&gt;</span></div>
<div class="ln" style="top:380.12px;color:#858585">12</div>
<div class="g" style="left:119.00px;top:378.62px;height:34.62px"></div>
<div class="g" style="left:174.16px;top:378.62px;height:34.62px"></div>
<div class="g" style="left:229.32px;top:378.62px;height:34.62px"></div>
<div class="g" style="left:284.48px;top:378.62px;height:34.62px"></div>
<div class="g" style="left:339.64px;top:378.62px;height:34.62px"></div>
<div class="g" style="left:394.80px;top:378.62px;height:34.62px"></div>
<div class="cl" style="top:380.12px">                        <span class="p">&lt;</span><span class="t">input</span><span class="e"> </span><span class="at">class</span><span class="q">=</span><span class="s">&quot;text-input field-input&quot;</span></div>
<div class="ln" style="top:414.54px;color:#858585">13</div>
<div class="g" style="left:119.00px;top:413.04px;height:34.62px"></div>
<div class="g" style="left:174.16px;top:413.04px;height:34.62px"></div>
<div class="g" style="left:229.32px;top:413.04px;height:34.62px"></div>
<div class="g" style="left:284.48px;top:413.04px;height:34.62px"></div>
<div class="g" style="left:339.64px;top:413.04px;height:34.62px"></div>
<div class="g" style="left:394.80px;top:413.04px;height:34.62px"></div>
<div class="cl" style="top:414.54px">                        <span class="p">&lt;</span><span class="t">label</span><span class="e"> </span><span class="at">class</span><span class="q">=</span><span class="s">&quot;float-label__label&quot;</span></div>
<div class="ln" style="top:448.96px;color:#858585">14</div>
<div class="g" style="left:119.00px;top:447.46px;height:34.62px"></div>
<div class="g" style="left:174.16px;top:447.46px;height:34.62px"></div>
<div class="g" style="left:229.32px;top:447.46px;height:34.62px"></div>
<div class="g" style="left:284.48px;top:447.46px;height:34.62px"></div>
<div class="g" style="left:339.64px;top:447.46px;height:34.62px"></div>
<div class="cl" style="top:448.96px">                    <span class="p">&lt;/</span><span class="t">div</span><span class="p">&gt;</span></div>
<div class="ln" style="top:483.38px;color:#858585">15</div>
<div class="g" style="left:119.00px;top:481.88px;height:34.62px"></div>
<div class="g" style="left:174.16px;top:481.88px;height:34.62px"></div>
<div class="g" style="left:229.32px;top:481.88px;height:34.62px"></div>
<div class="g" style="left:284.48px;top:481.88px;height:34.62px"></div>
<div class="g" style="left:339.64px;top:481.88px;height:34.62px"></div>
<div class="cl" style="top:483.38px">                    <span class="p">&lt;</span><span class="t">div</span><span class="e"> </span><span class="at">class</span><span class="q">=</span><span class="s">&quot;control&quot;</span><span class="p">&gt;</span></div>
<div class="ln" style="top:517.80px;color:#858585">16</div>
<div class="g" style="left:119.00px;top:516.30px;height:34.62px"></div>
<div class="g" style="left:174.16px;top:516.30px;height:34.62px"></div>
<div class="g" style="left:229.32px;top:516.30px;height:34.62px"></div>
<div class="g" style="left:284.48px;top:516.30px;height:34.62px"></div>
<div class="g" style="left:339.64px;top:516.30px;height:34.62px"></div>
<div class="g" style="left:394.80px;top:516.30px;height:34.62px"></div>
<div class="cl" style="top:517.80px">                        <span class="p">&lt;</span><span class="t">button</span><span class="e"> </span><span class="at">class</span><span class="q">=</span><span class="s">&quot;field is-primary&quot;</span></div>
<div class="ln" style="top:552.22px;color:#858585">17</div>
<div class="g" style="left:119.00px;top:550.72px;height:34.62px"></div>
<div class="g" style="left:174.16px;top:550.72px;height:34.62px"></div>
<div class="g" style="left:229.32px;top:550.72px;height:34.62px"></div>
<div class="g" style="left:284.48px;top:550.72px;height:34.62px"></div>
<div class="g" style="left:339.64px;top:550.72px;height:34.62px"></div>
<div class="g" style="left:394.80px;top:550.72px;height:34.62px"></div>
<div class="g" style="left:449.96px;top:550.72px;height:34.62px"></div>
<div class="cl" style="top:552.22px">                            <span class="e">Submit</span></div>
<div class="ln" style="top:586.64px;color:#858585">18</div>
<div class="g" style="left:119.00px;top:585.14px;height:34.62px"></div>
<div class="g" style="left:174.16px;top:585.14px;height:34.62px"></div>
<div class="g" style="left:229.32px;top:585.14px;height:34.62px"></div>
<div class="g" style="left:284.48px;top:585.14px;height:34.62px"></div>
<div class="g" style="left:339.64px;top:585.14px;height:34.62px"></div>
<div class="g" style="left:394.80px;top:585.14px;height:34.62px"></div>
<div class="g" style="left:449.96px;top:585.14px;height:34.62px"></div>
<div class="cl" style="top:586.64px">                            <span class="p">&lt;</span><span class="t">i</span><span class="e"> </span><span class="at">class</span><span class="q">=</span><span class="s">&quot;fas fa-forward&quot;</span></div>
<div class="ln" style="top:621.06px;color:#858585">19</div>
<div class="g" style="left:119.00px;top:619.56px;height:34.62px"></div>
<div class="g" style="left:174.16px;top:619.56px;height:34.62px"></div>
<div class="g" style="left:229.32px;top:619.56px;height:34.62px"></div>
<div class="g" style="left:284.48px;top:619.56px;height:34.62px"></div>
<div class="g" style="left:339.64px;top:619.56px;height:34.62px"></div>
<div class="g" style="left:394.80px;top:619.56px;height:34.62px"></div>
<div class="cl" style="top:621.06px">                        <span class="p">&lt;/</span><span class="t">button</span><span class="p">&gt;</span></div>
<div class="ln" style="top:655.48px;color:#858585">20</div>
<div class="g" style="left:119.00px;top:653.98px;height:34.62px"></div>
<div class="g" style="left:174.16px;top:653.98px;height:34.62px"></div>
<div class="g" style="left:229.32px;top:653.98px;height:34.62px"></div>
<div class="g" style="left:284.48px;top:653.98px;height:34.62px"></div>
<div class="g" style="left:339.64px;top:653.98px;height:34.62px"></div>
<div class="cl" style="top:655.48px">                    <span class="p">&lt;/</span><span class="t">div</span><span class="p">&gt;</span></div>
<div class="ln" style="top:689.90px;color:#858585">21</div>
<div class="g" style="left:119.00px;top:688.40px;height:34.62px"></div>
<div class="g" style="left:174.16px;top:688.40px;height:34.62px"></div>
<div class="g" style="left:229.32px;top:688.40px;height:34.62px"></div>
<div class="g" style="left:284.48px;top:688.40px;height:34.62px"></div>
<div class="g" style="left:339.64px;top:688.40px;height:34.62px"></div>
<div class="cl" style="top:689.90px">                    <span class="p">&lt;</span><span class="t">div</span><span class="e"> </span><span class="at">class</span><span class="q">=</span><span class="s">&quot;control&quot;</span><span class="p">&gt;</span></div>
<div class="ln" style="top:724.32px;color:#858585">22</div>
<div class="g" style="left:119.00px;top:722.82px;height:34.62px"></div>
<div class="g" style="left:174.16px;top:722.82px;height:34.62px"></div>
<div class="g" style="left:229.32px;top:722.82px;height:34.62px"></div>
<div class="g" style="left:284.48px;top:722.82px;height:34.62px"></div>
<div class="g" style="left:339.64px;top:722.82px;height:34.62px"></div>
<div class="g" style="left:394.80px;top:722.82px;height:34.62px"></div>
<div class="cl" style="top:724.32px">                        <span class="p">&lt;</span><span class="t">div</span><span class="e"> </span><span class="at">style</span><span class="q">=</span><span class="s">&quot;width: 100%; text-align: center&quot;</span></div>
<div class="g" style="left:119.00px;top:757.24px;height:34.62px"></div>
<div class="g" style="left:174.16px;top:757.24px;height:34.62px"></div>
<div class="g" style="left:229.32px;top:757.24px;height:34.62px"></div>
<div class="g" style="left:284.48px;top:757.24px;height:34.62px"></div>
<div class="g" style="left:339.64px;top:757.24px;height:34.62px"></div>
<div class="g" style="left:394.80px;top:757.24px;height:34.62px"></div>
<div class="cl" style="top:758.74px">                        </div>
<div class="a" style="left:787px;top:0.5px;width:12px;height:14px;background:#a0a0a0"></div>
</div>
<div class="a" style="left:633px;top:1577.5px;width:850.5px;height:1.5px;background:#e4e7f2"></div>
<div class="lbl" style="left:652.5px;top:1604px;line-height:34px;letter-spacing:0.15px">Use Recaptcha Verification</div>
<svg class="a" style="left:1039px;top:1608px" width="27" height="27" viewBox="0 0 27 27"><circle cx="13.5" cy="13.3" r="10.8" fill="none" stroke="#555" stroke-width="2.2"/><circle cx="13.5" cy="8.6" r="1.6" fill="#555"/><rect x="12.3" y="11.5" width="2.4" height="7.5" fill="#555"/></svg>
<div class="a" style="left:652.3px;top:1661px;width:802.5px;height:75.5px;border-radius:6px;border:1.5px solid #dde0e6;background:#fff"></div>
<div class="a" style="left:676px;top:1685.8px;width:66px;height:27px;border-radius:14px;background:#a0a0a0"></div>
<div class="a" style="left:671.2px;top:1680px;width:38px;height:38px;border-radius:50%;background:#dcdcdc;box-shadow:0 2px 3px rgba(0,0,0,.35)"></div>
<div class="a" style="left:633px;top:1775.3px;width:850.5px;height:1.5px;background:#e4e7f2"></div>
<div class="a" style="left:595px;top:1781px;width:946px;height:139px;background:#ebebeb;border-top:1.8px solid #cdcdcd"></div>
<div class="a" style="left:1160.8px;top:1831.2px;width:133.2px;height:69.4px;border-radius:8px;background:#f4f5f7;box-shadow:0 2px 3px rgba(0,0,0,.3)"></div>
<div class="a" style="left:1160.8px;top:1849px;width:133.2px;text-align:center;font-size:28px;color:#111;line-height:34px">Close</div>
<div class="a" style="left:1371px;top:1831.2px;width:131.7px;height:69.4px;border-radius:8px;background:#4560ec;box-shadow:0 2px 3px rgba(0,0,0,.3)"></div>
<div class="a" style="left:1371px;top:1849px;width:131.7px;text-align:center;font-size:28px;color:#fff;line-height:34px">Apply</div>
</body></html>
